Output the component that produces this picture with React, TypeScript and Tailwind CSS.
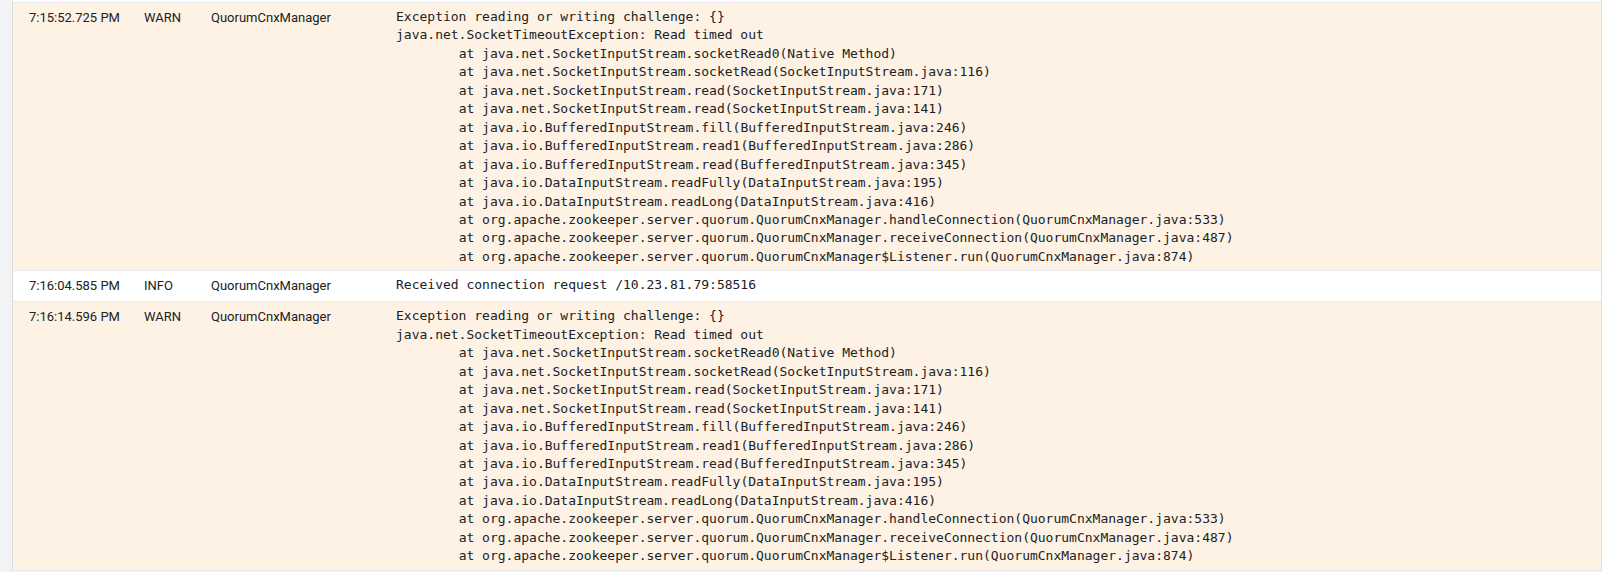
import React from 'react';

type LogRow = {
  time: string;
  level: string;
  logger: string;
  message: string;
};

const stack = [
  'Exception reading or writing challenge: {}',
  'java.net.SocketTimeoutException: Read timed out',
  '\tat java.net.SocketInputStream.socketRead0(Native Method)',
  '\tat java.net.SocketInputStream.socketRead(SocketInputStream.java:116)',
  '\tat java.net.SocketInputStream.read(SocketInputStream.java:171)',
  '\tat java.net.SocketInputStream.read(SocketInputStream.java:141)',
  '\tat java.io.BufferedInputStream.fill(BufferedInputStream.java:246)',
  '\tat java.io.BufferedInputStream.read1(BufferedInputStream.java:286)',
  '\tat java.io.BufferedInputStream.read(BufferedInputStream.java:345)',
  '\tat java.io.DataInputStream.readFully(DataInputStream.java:195)',
  '\tat java.io.DataInputStream.readLong(DataInputStream.java:416)',
  '\tat org.apache.zookeeper.server.quorum.QuorumCnxManager.handleConnection(QuorumCnxManager.java:533)',
  '\tat org.apache.zookeeper.server.quorum.QuorumCnxManager.receiveConnection(QuorumCnxManager.java:487)',
  '\tat org.apache.zookeeper.server.quorum.QuorumCnxManager$Listener.run(QuorumCnxManager.java:874)',
].join('\n');

const rows: LogRow[] = [
  { time: '7:15:52.725 PM', level: 'WARN', logger: 'QuorumCnxManager', message: stack },
  {
    time: '7:16:04.585 PM',
    level: 'INFO',
    logger: 'QuorumCnxManager',
    message: 'Received connection request /10.23.81.79:58516',
  },
  { time: '7:16:14.596 PM', level: 'WARN', logger: 'QuorumCnxManager', message: stack },
];

export default function App() {
  return (
    <div className="h-[572px] w-[1602px] overflow-hidden bg-[#f1f3f4] pl-[12px]">
      <div className="border-l border-r border-[#dadce0] bg-white">
        {/* tail of previous row */}
        <div className="h-[2px] bg-white" />
        <div className="border-t border-[#e8eaed]">
          {rows.map((row, i) => (
            <div
              key={i}
              className={`grid min-h-[31px] grid-cols-[131px_67px_185px_1fr] border-b border-[#e8eaed] pt-[5px] pb-[4px] text-[#202124] ${
                row.level === 'WARN' ? 'bg-[#fef2e4]' : 'bg-white'
              }`}
            >
              <div className="pt-[1px] pl-[16px] font-['Roboto',sans-serif] text-[13px] leading-[18.46px]">{row.time}</div>
              <div className="pt-[1px] font-['Roboto',sans-serif] text-[13px] leading-[18.46px]">{row.level}</div>
              <div className="pt-[1px] font-['Roboto',sans-serif] text-[13px] leading-[18.46px]">{row.logger}</div>
              <pre className="m-0 font-['DejaVu_Sans_Mono',monospace] text-[13px] leading-[18.46px] [tab-size:8] whitespace-pre">
                {row.message}
              </pre>
            </div>
          ))}
        </div>
      </div>
    </div>
  );
}
